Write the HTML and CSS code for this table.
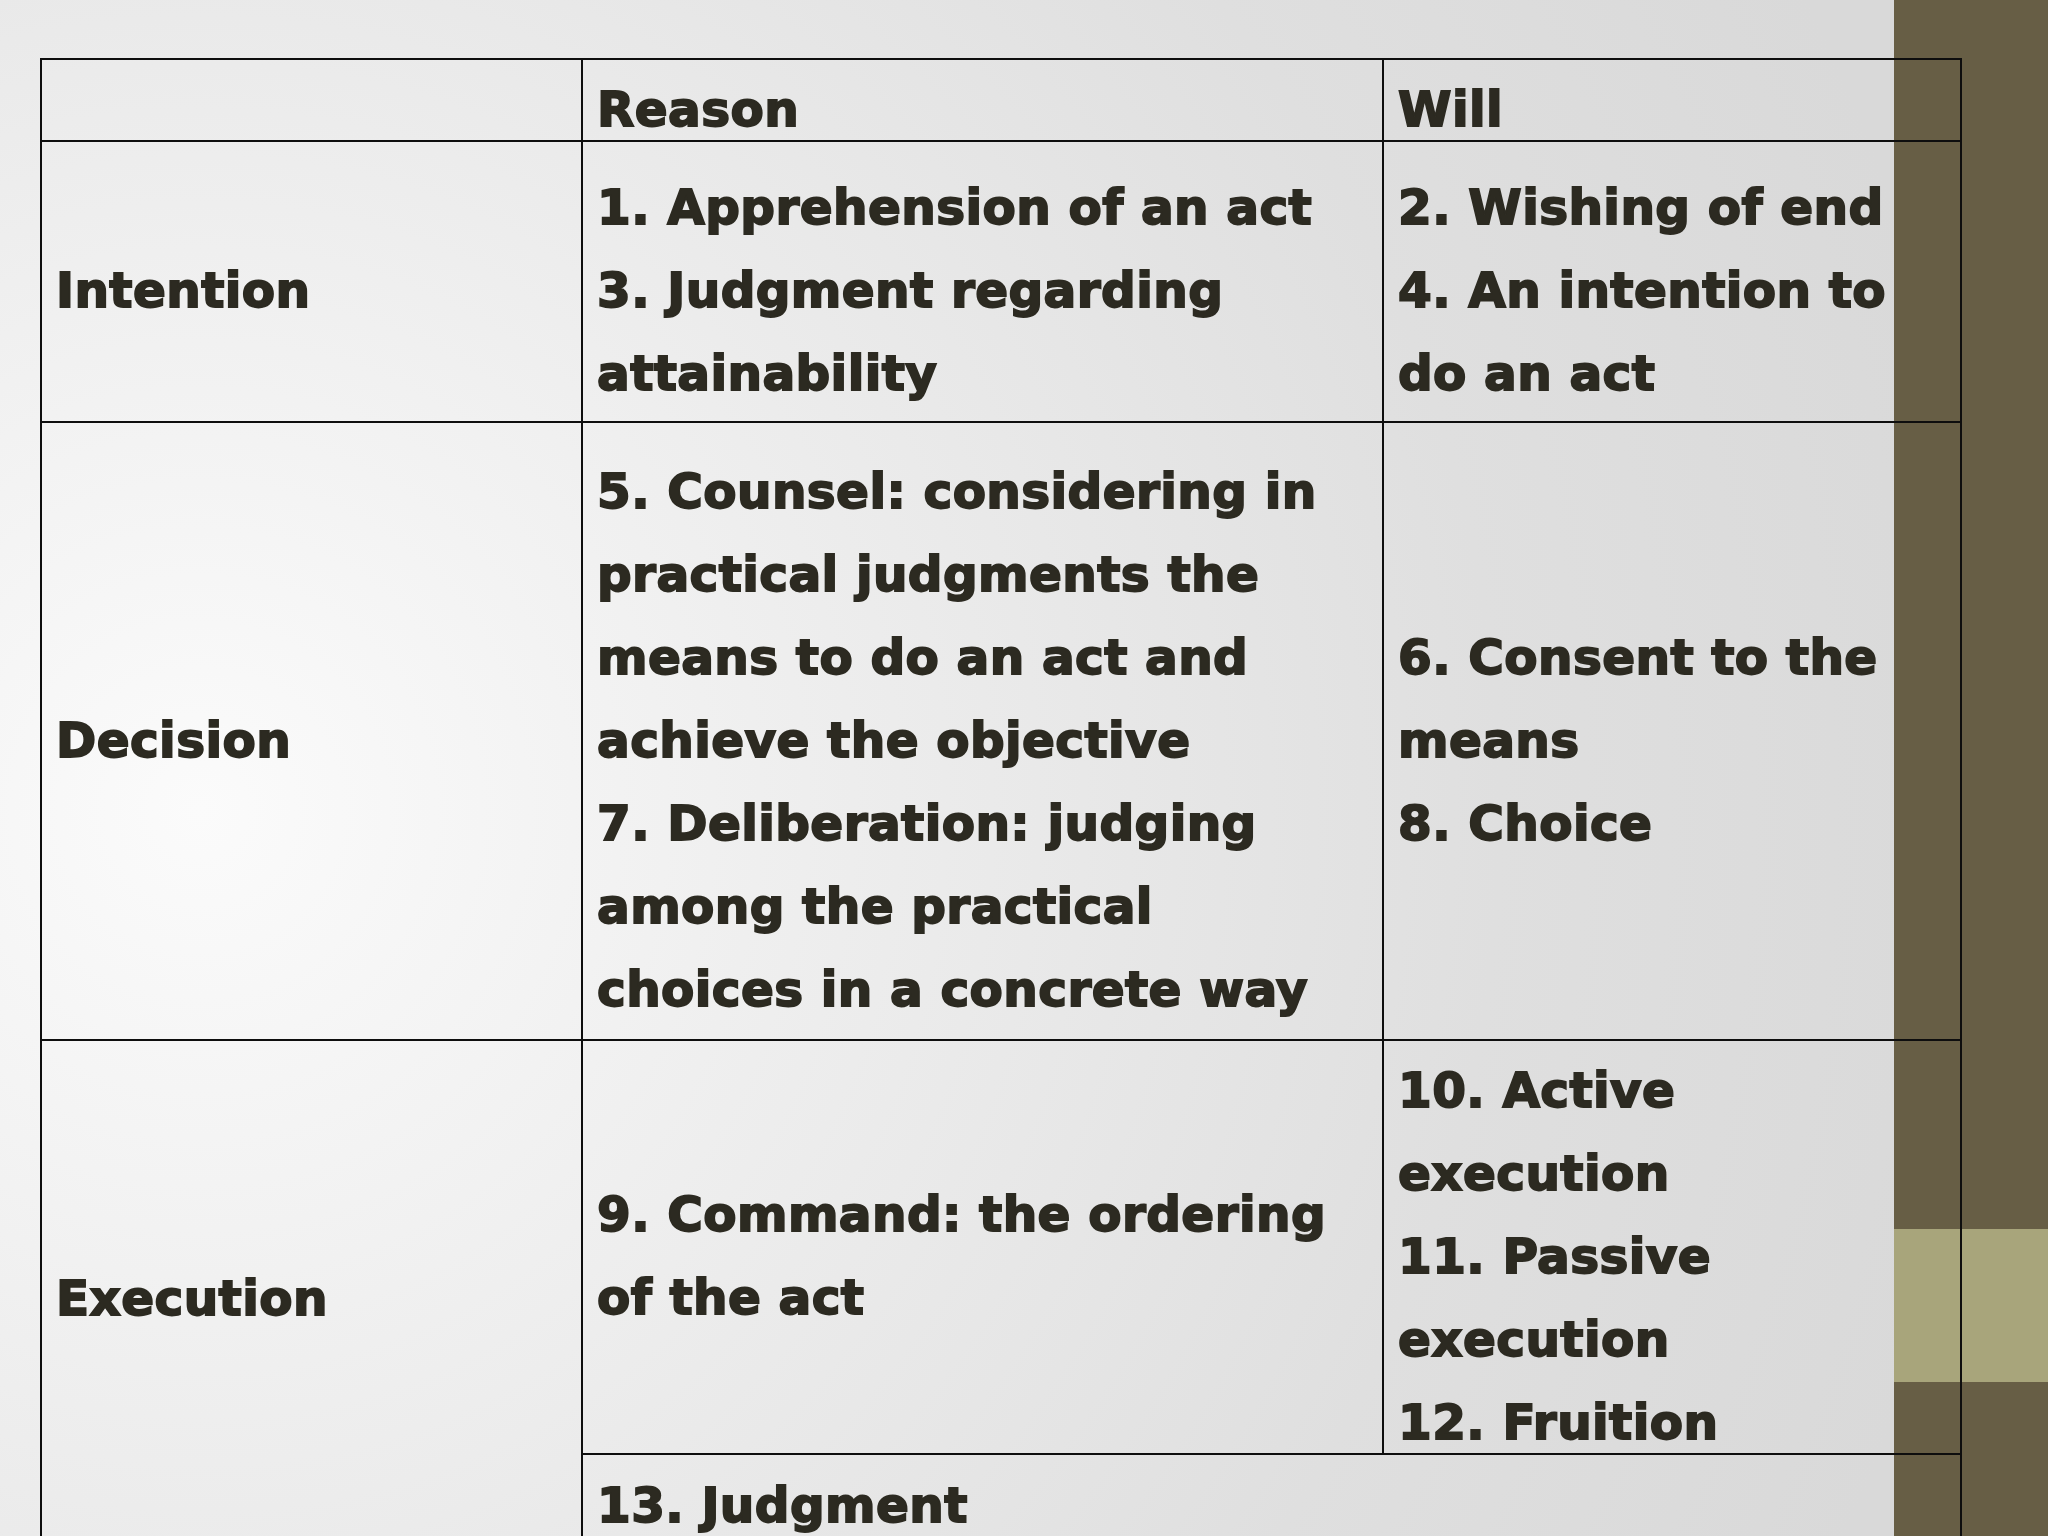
FILE: index.html
```html
<!DOCTYPE html>
<html lang="en">
<head>
<meta charset="utf-8">
<title>Reason and Will</title>
<link rel="stylesheet" href="styles.css">
</head>
<body>
<main class="slide">
  <div class="grid">
    <div class="cell head label"></div>
    <div class="cell head"><p>Reason</p></div>
    <div class="cell head last"><p>Will</p></div>

    <div class="cell label"><p>Intention</p></div>
    <div class="cell"><p>1. Apprehension of an act<br>3. Judgment regarding<br>attainability</p></div>
    <div class="cell last"><p>2. Wishing of end<br>4. An intention to<br>do an act</p></div>

    <div class="cell label"><p>Decision</p></div>
    <div class="cell"><p>5. Counsel: considering in<br>practical judgments the<br>means to do an act and<br>achieve the objective<br>7. Deliberation: judging<br>among the practical<br>choices in a concrete way</p></div>
    <div class="cell last"><p>6. Consent to the<br>means<br>8. Choice</p></div>

    <div class="cell label exec"><p>Execution</p></div>
    <div class="cell"><p>9. Command: the ordering<br>of the act</p></div>
    <div class="cell last"><p>10. Active<br>execution<br>11. Passive<br>execution<br>12. Fruition</p></div>

    <div class="cell wide last"><p>13. Judgment</p></div>
  </div>
</main>
</body>
</html>
```
FILE: styles.css
```css
html, body {
  margin: 0;
  padding: 0;
}
body {
  width: 2048px;
  height: 1536px;
  overflow: hidden;
  background-color: #dcdcdc;
  background-image:
    linear-gradient(#a8a57b, #a8a57b),
    linear-gradient(#675e45, #675e45),
    radial-gradient(circle at 200px 810px, #fbfbfb 0px, #ececec 700px, #dfdfdf 1300px, #d9d9d9 1800px);
  background-repeat: no-repeat, no-repeat, no-repeat;
  background-position: 1894px 1229px, 1894px 0, 0 0;
  background-size: 154px 153px, 154px 1536px, 2048px 1536px;
  font-family: "DejaVu Sans", "Liberation Sans", sans-serif;
  color: #2c2a21;
}
.slide {
  padding: 58px 0 0 40px;
}
.grid {
  display: grid;
  grid-template-columns: 541px 801px 578px;
  grid-template-rows: 82px 281px 618px 414px 84px;
  border-top: 2px solid #0e0e0e;
  border-left: 2px solid #0e0e0e;
  width: max-content;
}
.cell {
  box-sizing: border-box;
  border-right: 2px solid #0e0e0e;
  border-bottom: 2px solid #0e0e0e;
  display: flex;
  flex-direction: column;
  justify-content: center;
  padding: 18px 14px 0 14px;
  min-height: 0;
  overflow: visible;
}
.cell p {
  margin: 0;
  font-size: 48.5px;
  font-weight: 700;
  line-height: 83px;
  letter-spacing: 0.4px;
  white-space: nowrap;
  -webkit-text-stroke: 1.8px #2c2a21;
}
.exec {
  grid-row: 4 / 6;
}
.wide {
  grid-column: 2 / 4;
}
```
